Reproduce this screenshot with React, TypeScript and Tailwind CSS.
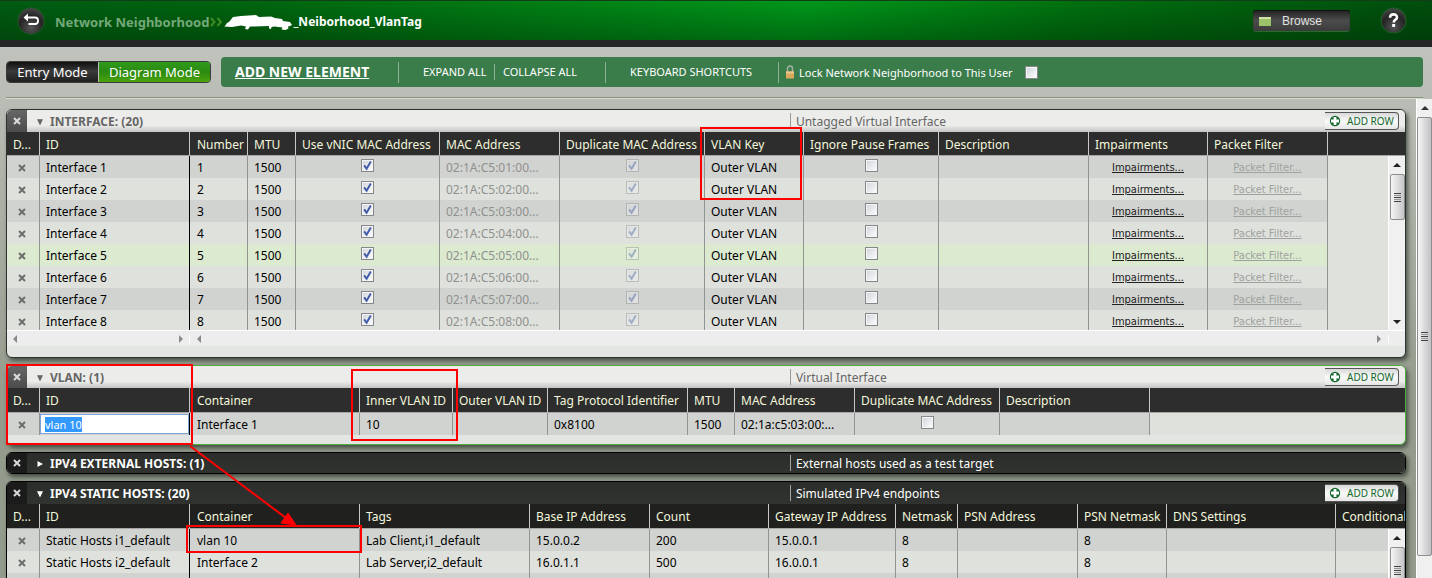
import React, { useEffect, useRef } from "react";

type Cell = React.ReactNode;
type Column = { label: string; width?: number };

function CheckBox({ label, checked = false, disabled = false }: { label: string; checked?: boolean; disabled?: boolean }) {
  return (
    <label className={`grid h-[13px] w-[13px] shrink-0 ${disabled ? "opacity-40" : ""}`}>
      <input
        type="checkbox"
        aria-label={label}
        defaultChecked={checked}
        disabled={disabled}
        className="peer col-start-1 row-start-1 h-[13px] w-[13px] appearance-none border border-[#85878a] bg-linear-to-br from-[#cfd3da] to-white shadow-[inset_0_0_0_1px_#f4f4f4]"
      />
      <svg viewBox="0 0 13 13" className="pointer-events-none invisible col-start-1 row-start-1 h-[13px] w-[13px] peer-checked:visible">
        <path d="M3.2 6.4 5.6 9.8 9.8 2.6" fill="none" stroke="#3f59a6" strokeWidth="1.9" />
      </svg>
    </label>
  );
}

function Cross({ className }: { className: string }) {
  return (
    <svg viewBox="0 0 8 8" className={`h-2 w-2 ${className}`} aria-hidden="true">
      <path d="M1 1 7 7M7 1 1 7" stroke="currentColor" strokeWidth="2" />
    </svg>
  );
}

function Arrow({ dir, className = "" }: { dir: "up" | "down" | "left" | "right"; className?: string }) {
  const d = {
    up: "M4 2 8 6H0Z",
    down: "M4 6 8 2H0Z",
    left: "M2 4 6 0V8Z",
    right: "M6 4 2 0V8Z",
  }[dir];
  return (
    <svg viewBox="0 0 8 8" className={`h-2 w-2 shrink-0 ${className}`} aria-hidden="true">
      <path d={d} fill="currentColor" />
    </svg>
  );
}

function Disclosure({ open }: { open: boolean }) {
  return (
    <svg viewBox="0 0 8 8" className="h-2 w-2 shrink-0" aria-hidden="true">
      <path d={open ? "M1 1.200H7L4 7.500Z" : "M1.500 1V7L7 4Z"} fill="currentColor" />
    </svg>
  );
}

function Grip() {
  return (
    <div className="flex w-[7px] flex-col gap-px">
      <div className="h-px bg-[#444]" />
      <div className="h-px bg-[#999]" />
      <div className="h-px bg-[#444]" />
      <div className="h-px bg-[#999]" />
      <div className="h-px bg-[#444]" />
    </div>
  );
}

function Panel({
  title,
  subtitle,
  dark = false,
  active = false,
  collapsed = false,
  children,
}: {
  title: string;
  subtitle: string;
  dark?: boolean;
  active?: boolean;
  collapsed?: boolean;
  children?: React.ReactNode;
}) {
  const border = active ? "border-[#4cae3c]" : dark ? "border-black" : "border-[#2e312e]";
  const bar = dark
    ? "bg-linear-to-b from-[#2b2d2a] to-[#30332f] text-white"
    : "bg-linear-to-b from-[#ececea] from-70% to-[#c4c5c3] text-[#666]";
  const close = dark ? "bg-[#1a1b1a] text-[#d8d8d8]" : "bg-linear-to-b from-[#666] to-[#4c4c4c] text-[#ddd]";
  return (
    <section className={`overflow-hidden rounded-md border bg-[#e3e5e2] shadow-[2px_3px_4px_rgba(30,40,30,0.65)] ${border}`}>
      <header className={`flex items-center ${collapsed ? "h-5" : "h-[22px]"} ${bar}`}>
        <div className="flex h-full w-[56%] items-center">
          <button aria-label={`Remove ${title}`} className={`flex h-full w-5 items-center justify-center ${close}`}>
            <Cross className="" />
          </button>
          <button className="flex items-center gap-[6px] pt-[2px] pl-[9px] text-xs font-bold">
            <Disclosure open={!collapsed} />
            {title}
          </button>
        </div>
        <div className={`flex h-4 flex-1 items-center border-l pt-[2px] pl-[5px] text-xs ${dark ? "border-[#a5a5a5]" : "border-[#999]"}`}>
          {subtitle}
        </div>
        {!collapsed && (
          <button className="mr-[6px] flex h-[18px] w-[74px] items-center gap-[6px] rounded-r-[4px] border border-l-0 border-[#555] bg-linear-to-b from-[#d8d8d8] via-[#fafafa] to-[#e6e6e6] pl-[4px] text-[10px] text-[#12692a]">
            <svg viewBox="0 0 12 12" className="h-3 w-3" aria-hidden="true">
              <circle cx="6" cy="6" r="5.2" fill="#12692a" />
              <path d="M6 2v8M2 6h8" stroke="#fff" strokeWidth="2.8" />
            </svg>
            ADD ROW
          </button>
        )}
      </header>
      {children}
    </section>
  );
}

function DataTable({
  columns,
  rows,
  header,
  plainTail = false,
  highlight = -1,
}: {
  columns: Column[];
  rows: Cell[][];
  header: string;
  plainTail?: boolean;
  highlight?: number;
}) {
  const last = columns.length - 1;
  return (
    <table className="w-full table-fixed border-separate border-spacing-0 text-left text-xs">
      <colgroup>
        {columns.map((c, i) => (
          <col key={i} style={c.width ? { width: c.width } : undefined} />
        ))}
      </colgroup>
      <thead>
        <tr className={header}>
          {columns.map((c, i) => (
            <th
              key={i}
              scope="col"
              className={`border-b border-[#a6a6a6] p-0 pt-[2px] font-normal whitespace-nowrap text-[#f3f7dc] ${i === 2 ? "pl-[7px]" : "pl-[6px]"} ${
                i < last ? "border-r border-r-[#c8c8c8]" : ""
              }`}
            >
              {c.label}
            </th>
          ))}
        </tr>
      </thead>
      <tbody>
        {rows.map((r, y) => (
          <tr key={y} className={`h-[22px] ${y === highlight ? "bg-[#dcebcf]" : y % 2 ? "bg-[#dfe1dc]" : "bg-[#d1d3d0]"}`}>
            {columns.map((_, i) => (
              <td
                key={i}
                className={`p-0 whitespace-nowrap text-black ${i < last ? "border-r" : plainTail ? "bg-[#dfe1dc]" : ""} ${
                  i === 1 ? "border-r-black" : "border-r-[#929492]"
                }`}
              >
                {i === 0 ? (
                  <button aria-label={`Delete row ${y + 1}`} className="flex w-full items-center justify-center pt-px pr-[3px]">
                    <Cross className="text-[#6c6e6c]" />
                  </button>
                ) : typeof r[i] === "string" ? (
                  <div className={`pt-[2px] ${i === 2 ? "pl-[7px]" : "pl-[6px]"}`}>{r[i]}</div>
                ) : (
                  r[i]
                )}
              </td>
            ))}
          </tr>
        ))}
      </tbody>
    </table>
  );
}

function InnerScroll({ className }: { className: string }) {
  return (
    <div aria-hidden="true" className={`absolute right-0 flex w-[17px] flex-col items-center border-l border-white bg-[#f0f0f0] pt-[5px] text-[#222] ${className}`}>
      <Arrow dir="up" />
      <div className="mt-[5px] flex h-[46px] w-[15px] items-center justify-center rounded-[2px] border border-[#8d8d8d] bg-linear-to-r from-[#f6f6f6] to-[#c5c5c8]">
        <Grip />
      </div>
      <Arrow dir="down" className="mt-auto mb-1" />
    </div>
  );
}

const INTERFACE_COLUMNS: Column[] = [
  { label: "D...", width: 33 },
  { label: "ID", width: 150 },
  { label: "Number", width: 58 },
  { label: "MTU", width: 48 },
  { label: "Use vNIC MAC Address", width: 144 },
  { label: "MAC Address", width: 120 },
  { label: "Duplicate MAC Address", width: 145 },
  { label: "VLAN Key", width: 99 },
  { label: "Ignore Pause Frames", width: 135 },
  { label: "Description", width: 150 },
  { label: "Impairments", width: 119 },
  { label: "Packet Filter", width: 120 },
  { label: "" },
];

const VLAN_COLUMNS: Column[] = [
  { label: "D...", width: 33 },
  { label: "ID", width: 150 },
  { label: "Container", width: 170 },
  { label: "Inner VLAN ID", width: 93 },
  { label: "Outer VLAN ID", width: 95 },
  { label: "Tag Protocol Identifier", width: 140 },
  { label: "MTU", width: 47 },
  { label: "MAC Address", width: 120 },
  { label: "Duplicate MAC Address", width: 145 },
  { label: "Description", width: 150 },
  { label: "" },
];

const HOST_COLUMNS: Column[] = [
  { label: "D...", width: 33 },
  { label: "ID", width: 150 },
  { label: "Container", width: 170 },
  { label: "Tags", width: 170 },
  { label: "Base IP Address", width: 120 },
  { label: "Count", width: 119 },
  { label: "Gateway IP Address", width: 127 },
  { label: "Netmask", width: 62 },
  { label: "PSN Address", width: 120 },
  { label: "PSN Netmask", width: 89 },
  { label: "DNS Settings", width: 169 },
  { label: "Conditional" },
];

const centered = "flex justify-center pb-[3px]";
const linkCell = "pt-[2px] text-center font-['DejaVu_Sans_Condensed','DejaVu_Sans',sans-serif] text-[11px]";

const interfaceRows: Cell[][] = [1, 2, 3, 4, 5, 6, 7, 8].map((n) => [
  "",
  `Interface ${n}`,
  String(n),
  "1500",
  <div className={centered}><CheckBox label={`Use vNIC MAC address, interface ${n}`} checked /></div>,
  <div className="pt-[2px] pl-[6px] text-[#8f918f]">{`02:1A:C5:0${n}:00...`}</div>,
  <div className={centered}><CheckBox label={`Duplicate MAC address, interface ${n}`} checked disabled /></div>,
  "Outer VLAN",
  <div className={centered}><CheckBox label={`Ignore pause frames, interface ${n}`} /></div>,
  "",
  <div className={linkCell}><a href="#impairments" className="text-[#222] underline">Impairments...</a></div>,
  <div className={linkCell}><a href="#filter" className="text-[#a0a2a0] underline">Packet Filter...</a></div>,
  "",
]);

const hostRows: Cell[][] = [
  ["", "Static Hosts i1_default", "vlan 10", "Lab Client,i1_default", "15.0.0.2", "200", "15.0.0.1", "8", "", "8", "", ""],
  ["", "Static Hosts i2_default", "Interface 2", "Lab Server,i2_default", "16.0.1.1", "500", "16.0.0.1", "8", "", "8", "", ""],
  ["", "", "", "", "", "", "", "", "", "", "", ""],
];

export default function App() {
  const idField = useRef<HTMLInputElement>(null);
  useEffect(() => {
    idField.current?.focus();
    idField.current?.select();
  }, []);

  const vlanRows: Cell[][] = [
    [
      "",
      <input
        ref={idField}
        aria-label="VLAN ID"
        defaultValue="vlan 10"
        className="block h-5 w-full border border-[#7ba4dc] bg-white pl-[4px] text-[11px] outline-none selection:bg-[#3399ff] selection:text-white"
      />,
      "Interface 1",
      "10",
      "",
      "0x8100",
      "1500",
      "02:1a:c5:03:00:...",
      <div className={centered}><CheckBox label="Duplicate MAC address, vlan 10" /></div>,
      "",
      "",
    ],
  ];

  return (
    <div className="relative flex h-screen flex-col overflow-hidden bg-linear-to-b from-[#c1c3bd] from-8% via-[#b3b7ae] via-25% to-[#939b8c] to-70% font-['Noto_Sans','Open_Sans',sans-serif] leading-4">
      <header className="flex h-[47px] shrink-0 items-center border-t border-b-[7px] border-t-[#123d18] border-b-[#252525] bg-[linear-gradient(to_bottom,rgba(0,0,0,0),rgba(0,30,0,0.35)),linear-gradient(100deg,#005c12_0%,#00660f_18%,#00971a_56%,#00700f_75%,#004d0d_100%)] pr-[25px] pl-[17px]">
        <button aria-label="Back" className="h-7 w-7">
          <svg viewBox="0 0 28 28" className="h-7 w-7">
            <defs>
              <radialGradient id="orb" cx="0.5" cy="0.75" r="0.75">
                <stop offset="0" stopColor="#555" />
                <stop offset="0.6" stopColor="#242424" />
                <stop offset="1" stopColor="#4a4a4a" />
              </radialGradient>
            </defs>
            <circle cx="14" cy="14" r="13.3" fill="url(#orb)" stroke="#1d5a26" strokeWidth="1" />
            <path d="M10 10.500h8.200c3.800 0 3.800 6.500 0 6.500H11.500" fill="none" stroke="#fff" strokeWidth="1.800" />
            <path d="M6.500 10.500 11 6.500v8Z" fill="#fff" />
          </svg>
        </button>
        <nav className="flex flex-1 items-center pt-[3px] pl-[10px] text-[13px] font-bold">
          <a href="#network-neighborhood" className="text-[#74a878]">Network Neighborhood</a>
          <svg viewBox="0 0 14 10" className="h-[10px] w-[14px]" aria-hidden="true">
            <path d="M2 1l3.500 4L2 9M8.500 1 12 5 8.500 9" fill="none" stroke="#3f8a24" strokeWidth="2" />
          </svg>
          <svg viewBox="0 0 70 16" className="-mr-px ml-px h-4 w-[70px]" aria-hidden="true">
            <path d="M1 12 3 9 5 8 9 3l8-1 15-1 3 2 12-.5 4 1.500 7 1 1 2 7 1 2 3-2 1-2 .5.500 2-3 1.500-4-.5 1-2-8-1-3 .5-.5 2-2-.5V12l-16 .5-3 0-2 3-3-.5 1-2.500-5-1-9 1.500-8-.5Z" fill="#fff" />
          </svg>
          <span className="text-xs text-white">_Neiborhood_VlanTag</span>
        </nav>
        <button className="mr-[30px] flex h-[22px] w-[97px] items-center gap-[11px] rounded-[3px] border-b border-[#2a6a2e] bg-linear-to-b from-[#222] via-[#4c4c4c] to-[#3c3c3c] pt-px pl-[6px] font-['Liberation_Sans',sans-serif] text-xs text-[#e2e2e2] shadow-[inset_0_1px_1px_#111]">
          <svg viewBox="0 0 12 10" className="h-[10px] w-3" aria-hidden="true">
            <rect y="1" width="12" height="9" fill="#9cc36a" />
            <rect y="1" width="12" height="2" fill="#cfe3a5" />
          </svg>
          Browse
        </button>
        <button aria-label="Help" className="h-[27px] w-[27px]">
          <svg viewBox="0 0 27 27" className="h-[27px] w-[27px]">
            <circle cx="13.500" cy="13.500" r="12.500" fill="url(#orb)" stroke="#1d5a26" strokeWidth="1.200" />
            <path d="M10 10.800c0-4.600 7-4.400 7-.6 0 2.700-3.300 2.500-3.300 5.300" fill="none" stroke="#fff" strokeWidth="2.600" />
            <rect x="12.200" y="17" width="2.900" height="2.900" fill="#fff" />
          </svg>
        </button>
      </header>

      <div className="flex shrink-0 items-center gap-[10px] pt-[10px] pr-[9px] pb-[10px] pl-[6px]">
        <div className="flex h-[22px] overflow-hidden rounded-[4px] border border-[#3c3c3c] text-[13px] text-white [text-shadow:1px_1px_1px_#111]">
          <button className="w-[92px] border-r border-[#bbb] bg-linear-to-b from-[#111] via-[#3a3a3a] via-45% to-[#202020]">Entry Mode</button>
          <button className="w-[111px] bg-linear-to-b from-[#2f9a1c] via-[#2b8a10] via-50% to-[#4aa30a]">Diagram Mode</button>
        </div>
        <div className="flex h-[30px] flex-1 items-center rounded-[4px] bg-[#3b7c4b] text-[11px] text-white">
          <div className="flex h-[21px] w-[178px] items-center border-r border-[#8fb096] pl-[14px]">
            <button className="text-sm leading-4 font-bold underline">ADD NEW ELEMENT</button>
          </div>
          <div className="flex h-[21px] w-[207px] items-center border-r border-[#8fb096] pl-6">
            <button className="h-4 w-[72px] border-r border-[#8fb096] text-left">EXPAND ALL</button>
            <button className="pl-2">COLLAPSE ALL</button>
          </div>
          <div className="flex h-[21px] w-[173px] items-center border-r border-[#8fb096] pl-6">
            <button>KEYBOARD SHORTCUTS</button>
          </div>
          <svg viewBox="0 0 10 14" className="ml-[6px] h-[14px] w-[10px]" aria-hidden="true">
            <path d="M2.500 7V3.500a2.500 2.500 0 0 1 5 0V7" fill="none" stroke="#a5b0a5" strokeWidth="1.500" />
            <rect x="1" y="6.500" width="8" height="7" fill="#dba95b" />
            <rect x="1" y="6.500" width="8" height="2" fill="#ecc98a" />
          </svg>
          <span className="w-[230px] pt-[2px] pl-1 text-[11px]">Lock Network Neighborhood to This User</span>
          <CheckBox label="Lock Network Neighborhood to This User" />
        </div>
      </div>
      <div className="mr-[9px] ml-[6px] h-[2px] shrink-0 border-t border-[#8b9185] bg-[#d3dec5]" />

      <div className="flex min-h-0 flex-1">
        <main className="flex min-w-0 flex-1 flex-col gap-[7px] overflow-hidden pt-[10px] pr-[10px] pl-[6px] *:shrink-0">
          <Panel title="INTERFACE: (20)" subtitle="Untagged Virtual Interface">
            <div className="relative">
              <div className="max-h-[198px] overflow-hidden bg-[#dfe1dc]">
                <DataTable columns={INTERFACE_COLUMNS} rows={interfaceRows} header="h-6 bg-[#2d2d2d]" plainTail highlight={4} />
              </div>
              <InnerScroll className="top-6 bottom-0" />
            </div>
            <div aria-hidden="true" className="mb-[11px] flex h-4 items-center border-t border-white bg-[#ededed] pr-4 text-[#8a8a8a]">
              <div className="flex w-[183px] justify-between border-r border-white px-1">
                <Arrow dir="left" />
                <Arrow dir="right" />
              </div>
              <div className="flex flex-1 justify-between border-r border-white px-[5px]">
                <Arrow dir="left" />
                <Arrow dir="right" />
              </div>
            </div>
          </Panel>

          <Panel title="VLAN: (1)" subtitle="Virtual Interface" active>
            <div className="mb-[9px] bg-[#dfe1dc]">
              <DataTable columns={VLAN_COLUMNS} rows={vlanRows} header="h-[25px] bg-[#2d2d2d]" plainTail />
            </div>
          </Panel>

          <Panel title="IPV4 EXTERNAL HOSTS: (1)" subtitle="External hosts used as a test target" dark collapsed />

          <Panel title="IPV4 STATIC HOSTS: (20)" subtitle="Simulated IPv4 endpoints" dark>
            <div className="relative">
              <DataTable columns={HOST_COLUMNS} rows={hostRows} header="h-[25px] bg-[#20201f]" />
              <InnerScroll className="top-[25px] h-[174px]" />
            </div>
          </Panel>
        </main>

        <div aria-hidden="true" className="flex w-4 shrink-0 flex-col items-center border-l border-white bg-[#f0f0f0] pt-[5px] pb-[22px] text-[#333]">
          <Arrow dir="up" />
          <div className="mt-[5px] flex w-[15px] flex-1 items-center justify-center rounded-[2px] border border-[#8d8d8d] bg-linear-to-r from-[#f6f6f6] to-[#c0c0c6]">
            <Grip />
          </div>
        </div>
      </div>

      <div className="pointer-events-none absolute top-[127px] left-[700px] h-[73px] w-[102px] border-2 border-[#f00]" />
      <div className="pointer-events-none absolute top-[364px] left-[6px] h-[81px] w-[187px] border-2 border-[#f00]" />
      <div className="pointer-events-none absolute top-[369px] left-[351px] h-[72px] w-[107px] border-2 border-[#f00]" />
      <div className="pointer-events-none absolute top-[525px] left-[186px] h-[28px] w-[176px] border-2 border-[#f00]" />
      <svg viewBox="0 0 110 84" className="pointer-events-none absolute top-[444px] left-[188px] h-[84px] w-[110px]" aria-hidden="true">
        <path d="M2 2 98 74" stroke="#f00" strokeWidth="2" />
        <path d="M108 81 100 69 93 79Z" fill="#f00" stroke="#f00" />
      </svg>
    </div>
  );
}
